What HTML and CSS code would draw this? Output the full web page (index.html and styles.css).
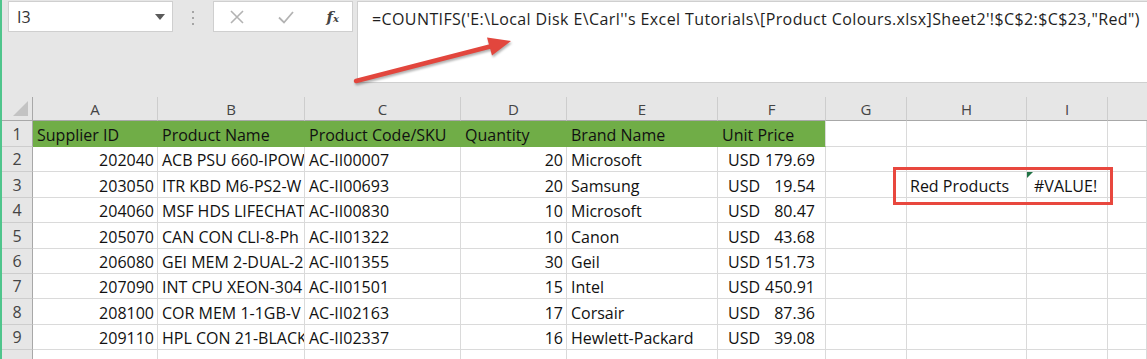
FILE: index.html
```html
<!DOCTYPE html>
<html lang="en">
<head>
  <meta charset="UTF-8" />
  <title>COUNTIFS external reference</title>
  <link rel="stylesheet" href="styles.css">
</head>
<body>

  <div class="app">
    <!-- Formula bar -->
    <div class="toolbar">
      <div class="namebox">
        <span>I3</span>
        <svg class="caret" width="10" height="6" viewBox="0 0 10 6"><path d="M0 0h10L5 6z" fill="#5a5a5a"/></svg>
      </div>
      <div class="grip"><i></i><i></i><i></i></div>
      <div class="fx-buttons">
        <svg width="16" height="16" viewBox="0 0 16 16"><path d="M2 2l12 12M14 2L2 14" stroke="#b3b3b3" stroke-width="1.6" fill="none"/></svg>
        <svg width="18" height="16" viewBox="0 0 18 16"><path d="M2 8.5l5 5L16 3" stroke="#b3b3b3" stroke-width="1.8" fill="none"/></svg>
        <span class="fx">f<sub>x</sub></span>
      </div>
      <div class="formula">=COUNTIFS('E:\Local Disk E\Carl''s Excel Tutorials\[Product Colours.xlsx]Sheet2'!$C$2:$C$23,"Red")</div>
    </div>

    <!-- Worksheet -->
    <div class="sheet">
      <div class="corner"><span></span></div>
      <div class="colhead">A</div><div class="colhead">B</div><div class="colhead">C</div><div class="colhead">D</div><div class="colhead">E</div><div class="colhead">F</div><div class="colhead">G</div><div class="colhead">H</div><div class="colhead">I</div><div class="colhead last">&nbsp;</div>

      <div class="rowhead">1</div>
      <div class="cell head">Supplier ID</div>
      <div class="cell head">Product Name</div>
      <div class="cell head">Product Code/SKU</div>
      <div class="cell head">Quantity</div>
      <div class="cell head">Brand Name</div>
      <div class="cell head end">Unit Price</div>
      <div class="cell"></div><div class="cell"></div><div class="cell"></div><div class="cell"></div>

      <div class="rowhead">2</div>
      <div class="cell num">202040</div>
      <div class="cell">ACB PSU 660-IPOW</div>
      <div class="cell">AC-II00007</div>
      <div class="cell num">20</div>
      <div class="cell">Microsoft</div>
      <div class="cell money"><span>USD</span><span>179.69</span></div>
      <div class="cell"></div><div class="cell"></div><div class="cell"></div><div class="cell"></div>

      <div class="rowhead">3</div>
      <div class="cell num">203050</div>
      <div class="cell">ITR KBD M6-PS2-W</div>
      <div class="cell">AC-II00693</div>
      <div class="cell num">20</div>
      <div class="cell">Samsung</div>
      <div class="cell money"><span>USD</span><span>19.54</span></div>
      <div class="cell"></div>
      <div class="cell label">Red Products</div>
      <div class="cell error"><b class="flag"></b>#VALUE!</div>
      <div class="cell"></div>

      <div class="rowhead">4</div>
      <div class="cell num">204060</div>
      <div class="cell">MSF HDS LIFECHAT</div>
      <div class="cell">AC-II00830</div>
      <div class="cell num">10</div>
      <div class="cell">Microsoft</div>
      <div class="cell money"><span>USD</span><span>80.47</span></div>
      <div class="cell"></div><div class="cell"></div><div class="cell"></div><div class="cell"></div>

      <div class="rowhead">5</div>
      <div class="cell num">205070</div>
      <div class="cell">CAN CON CLI-8-Ph</div>
      <div class="cell">AC-II01322</div>
      <div class="cell num">10</div>
      <div class="cell">Canon</div>
      <div class="cell money"><span>USD</span><span>43.68</span></div>
      <div class="cell"></div><div class="cell"></div><div class="cell"></div><div class="cell"></div>

      <div class="rowhead">6</div>
      <div class="cell num">206080</div>
      <div class="cell">GEI MEM 2-DUAL-2</div>
      <div class="cell">AC-II01355</div>
      <div class="cell num">30</div>
      <div class="cell">Geil</div>
      <div class="cell money"><span>USD</span><span>151.73</span></div>
      <div class="cell"></div><div class="cell"></div><div class="cell"></div><div class="cell"></div>

      <div class="rowhead">7</div>
      <div class="cell num">207090</div>
      <div class="cell">INT CPU XEON-304</div>
      <div class="cell">AC-II01501</div>
      <div class="cell num">15</div>
      <div class="cell">Intel</div>
      <div class="cell money"><span>USD</span><span>450.91</span></div>
      <div class="cell"></div><div class="cell"></div><div class="cell"></div><div class="cell"></div>

      <div class="rowhead">8</div>
      <div class="cell num">208100</div>
      <div class="cell">COR MEM 1-1GB-V</div>
      <div class="cell">AC-II02163</div>
      <div class="cell num">17</div>
      <div class="cell">Corsair</div>
      <div class="cell money"><span>USD</span><span>87.36</span></div>
      <div class="cell"></div><div class="cell"></div><div class="cell"></div><div class="cell"></div>

      <div class="rowhead">9</div>
      <div class="cell num">209110</div>
      <div class="cell">HPL CON 21-BLACK</div>
      <div class="cell">AC-II02337</div>
      <div class="cell num">16</div>
      <div class="cell">Hewlett-Packard</div>
      <div class="cell money"><span>USD</span><span>39.08</span></div>
      <div class="cell"></div><div class="cell"></div><div class="cell"></div><div class="cell"></div>

      <!-- row 10 is only a few pixels tall at the bottom of the window -->
      <div class="rowhead"></div>
      <div class="cell"></div><div class="cell"></div><div class="cell"></div><div class="cell"></div><div class="cell"></div>
      <div class="cell"></div><div class="cell"></div><div class="cell"></div><div class="cell"></div><div class="cell"></div>
    </div>

    <!-- Annotations drawn over the screenshot -->
    <svg class="arrow" width="180" height="70" viewBox="340 30 180 70">
      <path d="M356 81L492 46" stroke="#e2463d" stroke-width="4.5" stroke-linecap="round" fill="none"/>
      <path d="M511 41L487 37.5L492 55.5z" fill="#e2463d"/>
    </svg>
    <div class="callout"></div>
  </div>

</body>
</html>
```

FILE: styles.css
```css
body {
  margin: 0;
  background: #e6e6e6;
  font-family: "Open Sans", Arial, sans-serif;
  overflow: hidden;
}

.app {
  position: relative;
  height: 359px;
  border-left: 2px solid #4fc58c;
}

/* ---------- formula bar ---------- */

.toolbar {
  display: flex;
  align-items: flex-start;
  padding: 1px 0 0 6px;
  height: 82px;
}

.namebox {
  width: 165px;
  height: 31px;
  box-sizing: border-box;
  background: #fff;
  border: 1px solid #cfcfcf;
  display: flex;
  align-items: center;
  justify-content: space-between;
  padding: 0 7px 0 8px;
  font-size: 16px;
  color: #333;
}

.grip {
  width: 40px;
  display: flex;
  flex-direction: column;
  align-items: center;
  gap: 4px;
  padding-top: 10px;
}

.grip i {
  width: 2px;
  height: 2px;
  background: #a5a5a5;
}

.fx-buttons {
  width: 140px;
  height: 31px;
  box-sizing: border-box;
  background: #fff;
  border: 1px solid #cfcfcf;
  display: flex;
  align-items: center;
  justify-content: space-between;
  padding: 0 13px 0 15px;
}

.fx {
  font-family: "DejaVu Serif", serif;
  font-style: italic;
  font-weight: bold;
  font-size: 15px;
  color: #444;
}

.fx sub {
  font-size: 10px;
  vertical-align: 0;
}

.formula {
  flex: 1;
  margin-left: 4px;
  height: 82px;
  box-sizing: border-box;
  background: #fff;
  border: 1px solid #cfcfcf;
  border-right: none;
  padding: 6px 0 0 14px;
  font-size: 16px;
  letter-spacing: 0.4px;
  color: #1e1e1e;
  white-space: nowrap;
  overflow: hidden;
}

/* ---------- worksheet grid ---------- */

.sheet {
  margin-top: 14px;
  display: grid;
  grid-template-columns: 31px 125px 147px 156px 106px 151px 108px 81px 120px 81px 1fr;
  grid-template-rows: 24px 26px 25px 26px 25px 26px 25px 25px 26px 25px 25px;
  font-size: 16px;
  color: #111;
}

.corner {
  border-right: 1px solid #a8a8a8;
  border-bottom: 1px solid #a8a8a8;
  position: relative;
}

.corner span {
  position: absolute;
  right: 4px;
  bottom: 4px;
  width: 0;
  height: 0;
  border-left: 15px solid transparent;
  border-bottom: 15px solid #c3c3c3;
}

.colhead {
  border-right: 1px solid #cdcdcd;
  border-bottom: 1px solid #a8a8a8;
  display: flex;
  align-items: center;
  justify-content: center;
  font-size: 15px;
  color: #444;
}

.colhead.last {
  border-right: none;
}

.rowhead {
  border-right: 1px solid #a8a8a8;
  border-bottom: 1px solid #cdcdcd;
  display: flex;
  align-items: flex-end;
  justify-content: center;
  padding-bottom: 1px;
  box-sizing: border-box;
  color: #444;
}

.cell {
  background: #fff;
  border-right: 1px solid #dadada;
  border-bottom: 1px solid #dadada;
  display: flex;
  align-items: flex-end;
  padding: 0 3px 0 4px;
  box-sizing: border-box;
  white-space: nowrap;
  overflow: hidden;
  line-height: 21px;
  position: relative;
}

.cell.head {
  background: #70ad47;
  border-color: #70ad47;
}

.cell.head.end {
  border-right-color: #dadada;
}

.cell.num {
  justify-content: flex-end;
}

.cell.money {
  justify-content: space-between;
  padding: 0 10px 0 10px;
}

.cell.label {
  padding-left: 3px;
}

.cell.error {
  padding-left: 7px;
}

.flag {
  position: absolute;
  top: 0;
  left: 0;
  width: 0;
  height: 0;
  border-top: 6px solid #217346;
  border-right: 6px solid transparent;
}

/* ---------- annotations ---------- */

.arrow {
  position: absolute;
  left: 338px;
  top: 30px;
  filter: drop-shadow(1px 2px 1px rgba(0, 0, 0, 0.3));
}

.callout {
  position: absolute;
  left: 891px;
  top: 167px;
  width: 220px;
  height: 38px;
  box-sizing: border-box;
  border: 3px solid #e8473e;
}
```
